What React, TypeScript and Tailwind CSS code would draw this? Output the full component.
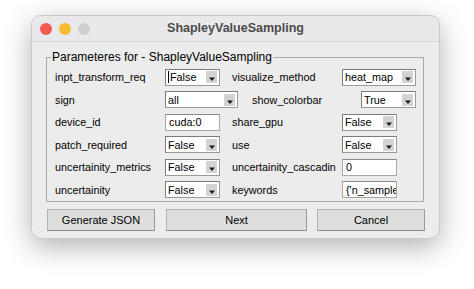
import React from "react";
import clsx from "clsx";

type Ctrl = {
    kind: "combo" | "entry";
    text: string;
    width: string;
    caret?: boolean;
};

type Row = {
    label: string;
    left: Ctrl;
    leftCell: string;
    right: string;
    rightLabel: string;
    rightCtrl: Ctrl;
};

const rows: Row[] = [
    {
        label: "inpt_transform_req",
        left: { kind: "combo", text: "False", width: "w-[55px]", caret: true },
        leftCell: "w-[67px]",
        right: "visualize_method",
        rightLabel: "w-[110px]",
        rightCtrl: { kind: "combo", text: "heat_map", width: "w-[74px]" },
    },
    {
        label: "sign",
        left: { kind: "combo", text: "all", width: "w-[73px]" },
        leftCell: "w-[87px]",
        right: "show_colorbar",
        rightLabel: "w-[109px]",
        rightCtrl: { kind: "combo", text: "True", width: "w-[55px]" },
    },
    {
        label: "device_id",
        left: { kind: "entry", text: "cuda:0", width: "w-[55px]" },
        leftCell: "w-[67px]",
        right: "share_gpu",
        rightLabel: "w-[110px]",
        rightCtrl: { kind: "combo", text: "False", width: "w-[55px]" },
    },
    {
        label: "patch_required",
        left: { kind: "combo", text: "False", width: "w-[55px]" },
        leftCell: "w-[67px]",
        right: "use",
        rightLabel: "w-[110px]",
        rightCtrl: { kind: "combo", text: "False", width: "w-[55px]" },
    },
    {
        label: "uncertainity_metrics",
        left: { kind: "combo", text: "False", width: "w-[55px]" },
        leftCell: "w-[67px]",
        right: "uncertainity_cascadin",
        rightLabel: "w-[110px]",
        rightCtrl: { kind: "entry", text: "0", width: "w-[55px]" },
    },
    {
        label: "uncertainity",
        left: { kind: "combo", text: "False", width: "w-[55px]" },
        leftCell: "w-[67px]",
        right: "keywords",
        rightLabel: "w-[110px]",
        rightCtrl: { kind: "entry", text: "{'n_samples", width: "w-[55px]" },
    },
];

const Control = ({ c }: { c: Ctrl }) => {
    if (c.kind === "entry") {
        return (
            <div
                className={clsx(
                    "flex h-[17px] items-center overflow-hidden whitespace-nowrap border border-[#a8a8a8] border-t-[#8a8a8a] bg-white pl-[3px] text-[10.8px] text-black",
                    c.width
                )}
            >
                {c.text}
            </div>
        );
    }
    return (
        <div
            className={clsx(
                "flex h-[17px] items-center border border-[#9a9a9a] border-t-[#7c7c7c] border-l-[#7c7c7c] bg-white",
                c.width
            )}
        >
            <div className="flex flex-1 items-center overflow-hidden whitespace-nowrap pl-[2px] text-[10.8px] text-black">
                {c.caret && <span className="mr-[1px] h-[12px] w-[1px] bg-black"></span>}
                {c.text}
            </div>
            <div className="mr-[2px] flex h-[12px] w-[11px] items-end justify-center bg-[#d3d3d3] pb-[2px]">
                <svg width="6" height="4" viewBox="0 0 6 4">
                    <path d="M0 0.5h6L3 4z" fill="#1a1a1a" />
                </svg>
            </div>
        </div>
    );
};

export default function App() {
    return (
        <div className="min-h-[289px] bg-white pl-[31px] pt-[15px] font-['Liberation_Sans',Arial,sans-serif]">
            <div className="flex h-[224px] w-[409px] flex-col overflow-hidden rounded-[10px] border border-[#c9c9c9] bg-[#ececec] shadow-[0_8px_28px_rgba(0,0,0,0.3)]">
                {/* title bar */}
                <div className="grid h-[26px] shrink-0 grid-cols-[1fr_auto_1fr] items-center border-b border-[#d4d4d4] bg-[#e9e9eb]">
                    <div className="flex items-center gap-[7px] pl-[8px]">
                        <span className="h-[12px] w-[12px] rounded-full bg-[#f25a53]"></span>
                        <span className="h-[12px] w-[12px] rounded-full bg-[#f7bb2f]"></span>
                        <span className="h-[12px] w-[12px] rounded-full bg-[#cfcfd2]"></span>
                    </div>
                    <div className="text-[12.5px] font-bold text-[#4b4b4b]">ShapleyValueSampling</div>
                    <div></div>
                </div>

                {/* body */}
                <div className="flex flex-1 flex-col pl-[14px] pt-[8px]">
                    <fieldset className="w-[378px] border border-[#a9a9a9] pl-[8px] pt-[2px]">
                        <legend className="-ml-[4px] px-[1px] text-[12px] leading-[14px] text-black">
                            Parameteres for - ShapleyValueSampling
                        </legend>
                        {rows.map((r, i) => (
                            <div key={i} className="flex h-[22.5px] items-center text-[10.8px] text-black">
                                <div className="w-[110px] whitespace-nowrap">{r.label}</div>
                                <div className={r.leftCell}>
                                    <Control c={r.left} />
                                </div>
                                <div className={clsx("overflow-hidden whitespace-nowrap", r.rightLabel)}>
                                    {r.right}
                                </div>
                                <Control c={r.rightCtrl} />
                            </div>
                        ))}
                    </fieldset>

                    <div className="mt-[7px] flex gap-[11px] pl-[1px] text-[11px] text-black">
                        <button className="h-[22px] w-[108px] border border-[#b2b2b2] border-b-[#8e8e8e] border-r-[#9a9a9a] bg-[#dedede]">
                            Generate JSON
                        </button>
                        <button className="h-[22px] w-[141px] border border-[#b2b2b2] border-b-[#8e8e8e] border-r-[#9a9a9a] bg-[#dedede]">
                            Next
                        </button>
                        <button className="-ml-[1px] h-[22px] w-[108px] border border-[#b2b2b2] border-b-[#8e8e8e] border-r-[#9a9a9a] bg-[#dedede]">
                            Cancel
                        </button>
                    </div>
                </div>
            </div>
        </div>
    );
}
